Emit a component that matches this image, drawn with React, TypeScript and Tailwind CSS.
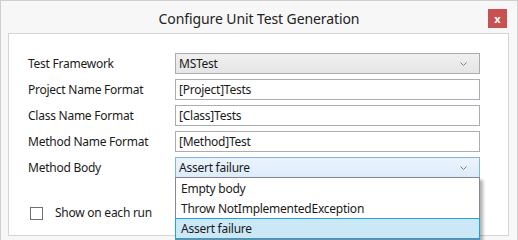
import { FC } from "react"

const font = { fontFamily: '"Segoe UI", "Noto Sans", "Open Sans", sans-serif' }

const Chevron: FC = () => (
  <svg width="7" height="4" viewBox="0 0 7 4" className="shrink-0">
    <path d="M0.5 0.5 L3.5 3.5 L6.5 0.5" fill="none" stroke="#808080" strokeWidth="1" />
  </svg>
)

const Row: FC<{ label: string; children: React.ReactNode }> = ({ label, children }) => (
  <div className="flex items-center h-[21px]">
    <div className="w-[147px] text-[12px] tracking-[-0.25px] text-[#1a1a1a]">{label}</div>
    {children}
  </div>
)

const TextBox: FC<{ value: string }> = ({ value }) => (
  <div className="w-[305px] h-[21px] border border-[#abadb3] bg-white px-[3px] text-[12px] tracking-[-0.25px] leading-[19px] text-[#1a1a1a]">
    {value}
  </div>
)

export default function App() {
  return (
    <div
      style={font}
      className="w-[518px] h-[240px] overflow-hidden bg-[#f7f7f7] border-l border-t border-r border-[#cfcfcf] relative"
    >
      <div className="h-[32px] flex items-center justify-center relative pt-[2px]">
        <span className="text-[14px] tracking-[-0.1px] text-[#222]">Configure Unit Test Generation</span>
        <div className="absolute left-[487px] top-[8px] w-[19px] h-[19px] bg-[#c75050] flex items-center justify-center text-white text-[11px] font-bold leading-none">
          x
        </div>
      </div>
      <div className="ml-[7px] w-[501px] h-[203px] bg-white border border-[#d5d5d5] pt-[19px] pl-[19px] relative">
        <div className="flex flex-col gap-[5px]">
          <Row label="Test Framework">
            <div className="w-[305px] h-[21px] border border-[#acacac] bg-gradient-to-b from-[#f0f0f0] to-[#e5e5e5] px-[3px] flex items-center justify-between pr-[12px]">
              <span className="text-[12px] tracking-[-0.25px] text-[#1a1a1a]">MSTest</span>
              <Chevron />
            </div>
          </Row>
          <Row label="Project Name Format">
            <TextBox value="[Project]Tests" />
          </Row>
          <Row label="Class Name Format">
            <TextBox value="[Class]Tests" />
          </Row>
          <Row label="Method Name Format">
            <TextBox value="[Method]Test" />
          </Row>
          <Row label="Method Body">
            <div className="w-[305px] h-[21px] border border-[#7eb4ea] bg-gradient-to-b from-[#ecf4fc] to-[#dcecfc] px-[3px] flex items-center justify-between pr-[12px]">
              <span className="text-[12px] tracking-[-0.25px] text-[#1a1a1a]">Assert failure</span>
              <Chevron />
            </div>
          </Row>
        </div>
        <div className="flex items-center mt-[26px] ml-[2px]">
          <div className="w-[13px] h-[13px] border border-[#707070] bg-white" />
          <span className="ml-[12px] text-[12px] tracking-[-0.25px] text-[#1a1a1a]">Show on each run</span>
        </div>
        <div className="absolute left-[166px] top-[143px] w-[305px] border border-[#828790] bg-white shadow-[3px_3px_3px_rgba(0,0,0,0.3)] text-[12px] tracking-[-0.25px] text-[#1a1a1a]">
          <div className="h-[20px] px-[5px] leading-[21px]">Empty body</div>
          <div className="h-[20px] px-[5px] leading-[21px]">Throw NotImplementedException</div>
          <div className="h-[21px] px-[5px] leading-[20px] bg-[#cbe8f6] border border-[#26a0da] ml-[-1px] mr-[-1px]">Assert failure</div>
        </div>
      </div>
    </div>
  )
}
